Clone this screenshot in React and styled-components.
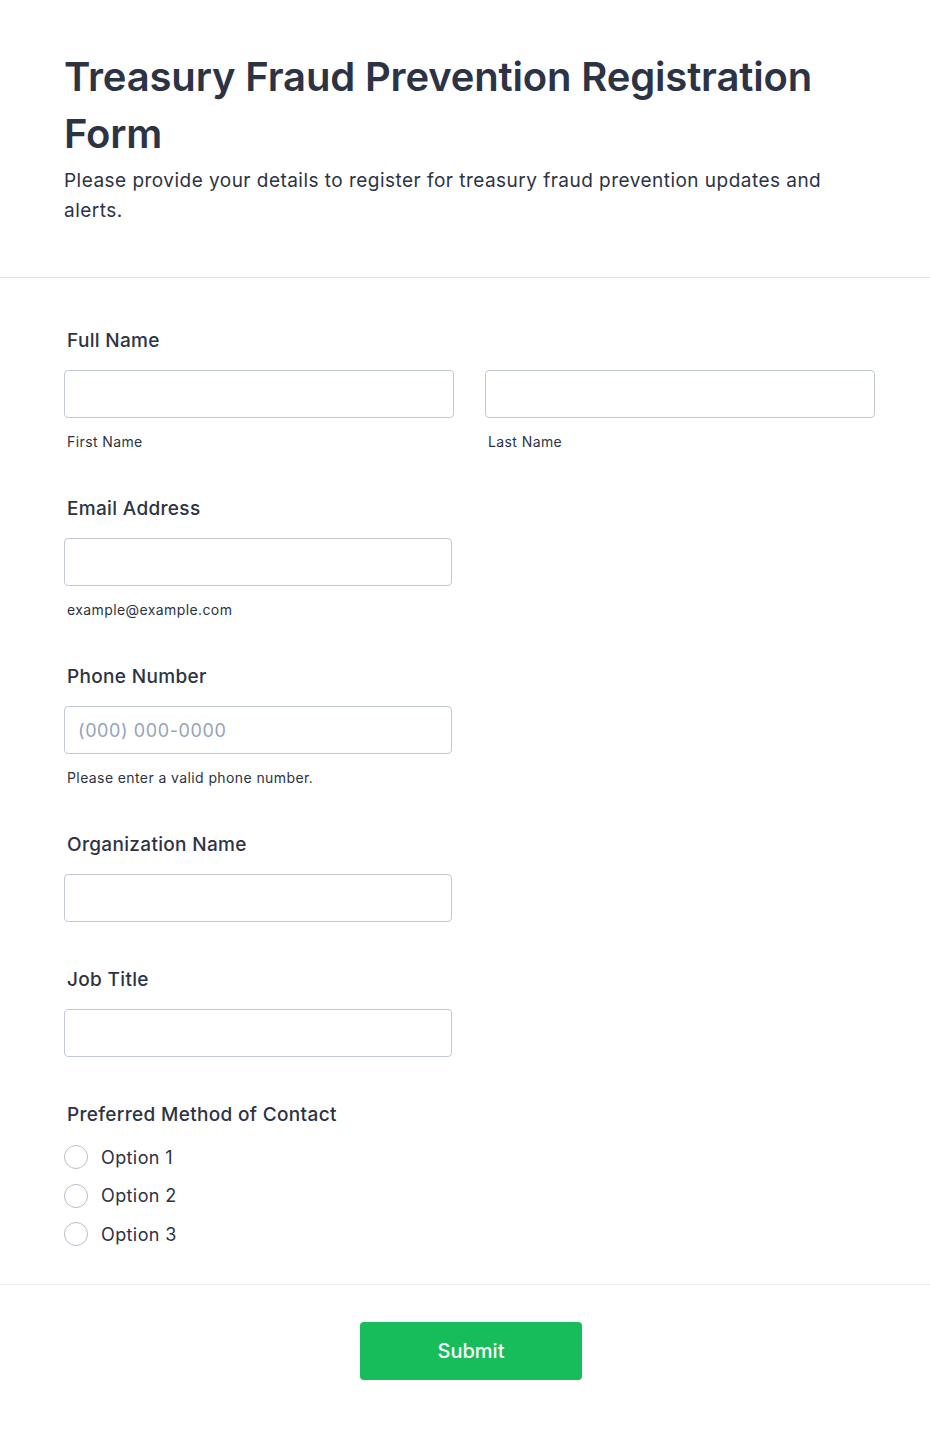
import React from 'react';
import styled, { createGlobalStyle } from 'styled-components';

const GlobalStyle = createGlobalStyle`
  html, body {
    margin: 0;
    padding: 0;
    background: #fff;
  }
  body {
    font-family: Inter, "Noto Sans", "Liberation Sans", sans-serif;
    color: #2c3345;
  }
  * {
    box-sizing: border-box;
  }
`;

const S = {};

S.Page = styled.div`
  width: 930px;
  min-height: 1431px;
  background: #fff;
`;

S.Header = styled.header`
  padding: 48px 55px 51px 64px;
  border-bottom: 1px solid #dfe1ea;
`;

S.Title = styled.h1`
  margin: 0;
  font-size: 40px;
  line-height: 57px;
  font-weight: 600;
  letter-spacing: -0.16px;
  color: #2c3345;
`;

S.Description = styled.p`
  margin: 4px 0 0;
  font-size: 19px;
  line-height: 30px;
  font-weight: 400;
  letter-spacing: 0.47px;
  color: #2c3345;
`;

S.Form = styled.form`
  display: flex;
  flex-direction: column;
  gap: 44px;
  padding: 49px 55px 30px 64px;
  border-bottom: 1px solid #eceef4;
`;

S.Field = styled.div`
  display: flex;
  flex-direction: column;
`;

S.Label = styled.label`
  display: block;
  padding-left: 3px;
  margin-bottom: ${p => (p.$tight ? '10px' : '16px')};
  font-size: 19px;
  line-height: 27px;
  font-weight: 500;
  letter-spacing: 0.33px;
  color: #2c3345;
`;

S.Row = styled.div`
  display: grid;
  grid-template-columns: 390px 390px;
  column-gap: 31px;
`;

S.Col = styled.div`
  display: flex;
  flex-direction: column;
`;

S.Input = styled.input`
  width: ${p => p.$width || '100%'};
  height: 48px;
  padding: 0 13px;
  border: 1px solid #c3c8d6;
  border-radius: 4px;
  background: #fff;
  font-family: inherit;
  font-size: 18px;
  letter-spacing: 0.6px;
  color: #2c3345;
  outline: none;

  &::placeholder {
    color: #95a3b9;
  }
`;

S.SubLabel = styled.span`
  display: block;
  margin-top: 15px;
  padding-left: 3px;
  font-size: 14px;
  line-height: 18px;
  letter-spacing: 0.4px;
  color: #2c3345;
`;

S.Options = styled.div`
  display: flex;
  flex-direction: column;
`;

S.Option = styled.label`
  display: flex;
  align-items: center;
  gap: 13px;
  height: 38.5px;
  font-size: 18px;
  letter-spacing: 0.4px;
  color: #2c3345;
  cursor: pointer;
`;

S.Radio = styled.span`
  width: 24px;
  height: 24px;
  border: 1px solid #b8bdc9;
  border-radius: 50%;
  background: #fff;
  flex-shrink: 0;
`;

S.Footer = styled.div`
  display: flex;
  justify-content: center;
  padding: 37px 55px 50px 64px;
`;

S.Submit = styled.button`
  width: 222px;
  height: 58px;
  margin-left: 3px;
  border: none;
  border-radius: 4px;
  background: #18bd5b;
  color: #fff;
  font-family: inherit;
  font-size: 20px;
  font-weight: 500;
  cursor: pointer;
`;

const options = ['Option 1', 'Option 2', 'Option 3'];

const App = () => (
  <S.Page>
    <GlobalStyle />
    <S.Header>
      <S.Title>Treasury Fraud Prevention Registration Form</S.Title>
      <S.Description>
        Please provide your details to register for treasury fraud prevention updates and alerts.
      </S.Description>
    </S.Header>

    <S.Form onSubmit={e => e.preventDefault()}>
      <S.Field>
        <S.Label>Full Name</S.Label>
        <S.Row>
          <S.Col>
            <S.Input type="text" />
            <S.SubLabel>First Name</S.SubLabel>
          </S.Col>
          <S.Col>
            <S.Input type="text" />
            <S.SubLabel>Last Name</S.SubLabel>
          </S.Col>
        </S.Row>
      </S.Field>

      <S.Field>
        <S.Label>Email Address</S.Label>
        <S.Input type="email" $width="388px" />
        <S.SubLabel>example@example.com</S.SubLabel>
      </S.Field>

      <S.Field>
        <S.Label>Phone Number</S.Label>
        <S.Input type="tel" $width="388px" placeholder="(000) 000-0000" />
        <S.SubLabel>Please enter a valid phone number.</S.SubLabel>
      </S.Field>

      <S.Field>
        <S.Label>Organization Name</S.Label>
        <S.Input type="text" $width="388px" />
      </S.Field>

      <S.Field>
        <S.Label>Job Title</S.Label>
        <S.Input type="text" $width="388px" />
      </S.Field>

      <S.Field>
        <S.Label $tight>Preferred Method of Contact</S.Label>
        <S.Options>
          {options.map(option => (
            <S.Option key={option}>
              <S.Radio />
              {option}
            </S.Option>
          ))}
        </S.Options>
      </S.Field>
    </S.Form>

    <S.Footer>
      <S.Submit type="button">Submit</S.Submit>
    </S.Footer>
  </S.Page>
);

export default App;
